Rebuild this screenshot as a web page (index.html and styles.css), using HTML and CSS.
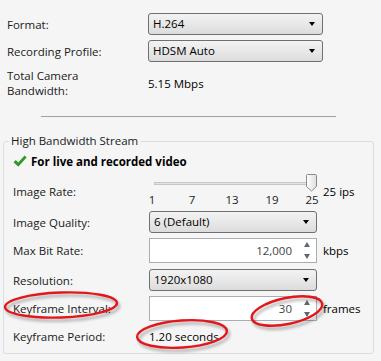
FILE: index.html
```html
<!DOCTYPE html>
<html lang="en">
<head>
    <meta charset="UTF-8">
    <title>Stream Settings</title>
    <link rel="stylesheet" href="styles.css">
</head>
<body>

<div class="page">
    <div class="row">
        <span class="label">Format:</span>
        <div class="select wide">H.264<i class="caret"></i></div>
    </div>
    <div class="row">
        <span class="label">Recording Profile:</span>
        <div class="select wide">HDSM Auto<i class="caret"></i></div>
    </div>
    <div class="row row-total">
        <span class="label">Total Camera<br>Bandwidth:</span>
        <span class="value">5.15 Mbps</span>
    </div>

    <div class="sep"></div>

    <fieldset class="group">
        <legend>High Bandwidth Stream</legend>

        <div class="note">
            <svg class="check" width="14" height="13" viewBox="0 0 14 13">
                <path d="M0.5 7.2 L2.8 5 L5.3 7.6 L11.6 0.6 L13.6 2.6 L5.3 11.8 Z" fill="#2f9a2c"/>
            </svg>
            For live and recorded video
        </div>

        <div class="row row-slider">
            <span class="label">Image Rate:</span>
            <div class="slider">
                <div class="track">
                    <svg class="thumb" width="11" height="18" viewBox="0 0 11 18">
                        <defs>
                            <linearGradient id="tg" x1="0" y1="0" x2="1" y2="0">
                                <stop offset="0" stop-color="#ffffff"/>
                                <stop offset="1" stop-color="#dedede"/>
                            </linearGradient>
                        </defs>
                        <path d="M1.5 0.5 H9.5 Q10.5 0.5 10.5 1.5 V12.5 L5.5 17 L0.5 12.5 V1.5 Q0.5 0.5 1.5 0.5 Z" fill="url(#tg)" stroke="#8a8a8a"/>
                    </svg>
                </div>
                <div class="ticks">
                    <span>1</span><span>7</span><span>13</span><span>19</span><span>25</span>
                </div>
            </div>
            <span class="unit">25 ips</span>
        </div>

        <div class="row row-select">
            <span class="label">Image Quality:</span>
            <div class="select">6 (Default)<i class="caret"></i></div>
        </div>

        <div class="row row-spin">
            <span class="label">Max Bit Rate:</span>
            <div class="spin">
                <span class="spin-value">12,000</span>
                <span class="spin-arrows"><i class="up"></i><i class="down"></i></span>
            </div>
            <span class="unit">kbps</span>
        </div>

        <div class="row row-select">
            <span class="label">Resolution:</span>
            <div class="select">1920x1080<i class="caret"></i></div>
        </div>

        <div class="row row-spin">
            <span class="label">Keyframe Interval:</span>
            <div class="spin">
                <span class="spin-value">30</span>
                <span class="spin-arrows"><i class="up"></i><i class="down"></i></span>
            </div>
            <span class="unit">frames</span>
        </div>

        <div class="row row-period">
            <span class="label">Keyframe Period:</span>
            <span class="value">1.20 seconds</span>
        </div>
    </fieldset>

    <!-- hand drawn annotation marks -->
    <svg class="marks" width="381" height="361" viewBox="0 0 381 361">
        <g fill="none" stroke="#e3171b" stroke-width="2.4">
            <ellipse cx="61" cy="305" rx="56" ry="12.5" transform="rotate(-2 61 305)"/>
            <ellipse cx="287" cy="311" rx="36" ry="13" transform="rotate(-12 287 311)"/>
            <ellipse cx="182" cy="334" rx="45" ry="13.5" transform="rotate(-4 182 334)"/>
        </g>
    </svg>
</div>

</body>
</html>
```

FILE: styles.css
```css
body {
    margin: 0;
    padding: 0;
    background-color: #f5f5f5;
    font-family: 'Open Sans', 'Noto Sans', sans-serif;
    font-size: 11.5px;
    color: #1a1a1a;
}

.page {
    position: relative;
    width: 381px;
    height: 361px;
    box-sizing: border-box;
    padding: 13px 0 0 7px;
}

.row {
    display: flex;
    align-items: center;
    height: 22px;
    margin-bottom: 5px;
}

.label {
    width: 141px;
    flex-shrink: 0;
    line-height: 15px;
}

.select {
    position: relative;
    width: 168px;
    height: 22px;
    box-sizing: border-box;
    padding-left: 4px;
    line-height: 20px;
    border: 1px solid #707070;
    border-radius: 3px;
    background: linear-gradient(#f3f3f3, #e8e8e8 50%, #dcdcdc);
    color: #000;
}

.select.wide {
    width: 175px;
}

.caret {
    position: absolute;
    right: 7px;
    top: 8px;
    width: 0;
    height: 0;
    border-left: 3.5px solid transparent;
    border-right: 3.5px solid transparent;
    border-top: 4px solid #000;
}

.row-total {
    height: 30px;
    margin-top: 6px;
    margin-bottom: 0;
}

.value {
    color: #000;
}

.sep {
    margin: 18px 0 0 34px;
    width: 295px;
    height: 1px;
    background-color: #a0a0a0;
}

.group {
    margin: 16px 0 0 -4px;
    width: 371px;
    box-sizing: border-box;
    padding: 4px 0 0 9px;
    border: 1px solid #d5dfe5;
    border-radius: 3px;
}

.group legend {
    margin-left: -4px;
    padding: 0 2px;
    line-height: 16px;
}

.group .label {
    width: 136px;
}

.note {
    display: flex;
    align-items: center;
    height: 16px;
    font-weight: bold;
    color: #000;
}

.check {
    margin-right: 4px;
}

.row-slider {
    height: 36px;
    margin: 4px 0 2px 0;
}

.slider {
    width: 168px;
    height: 36px;
}

.track {
    position: relative;
    margin: 9px 0 0 5px;
    width: 162px;
    height: 3px;
    box-sizing: border-box;
    border: 1px solid #c6c6c6;
    background-color: #e3e3e3;
}

.thumb {
    position: absolute;
    right: -2px;
    top: -9px;
}

.ticks {
    display: grid;
    grid-template-columns: repeat(5, 40px);
    margin: 8px 0 0 -17px;
    text-align: center;
    line-height: 14px;
    color: #222;
}

.unit {
    margin-left: 6px;
    color: #000;
}

.row-select {
    height: 22px;
    margin-bottom: 5px;
}

.row-spin {
    height: 25px;
    margin-bottom: 6px;
}

.spin {
    display: flex;
    align-items: center;
    justify-content: flex-end;
    width: 168px;
    height: 25px;
    box-sizing: border-box;
    border: 1px solid #abadb3;
    background-color: #fff;
}

.spin-value {
    color: #444;
    margin-right: 8px;
}

.spin-arrows {
    display: flex;
    flex-direction: column;
    justify-content: space-between;
    align-items: center;
    width: 14px;
    height: 17px;
    margin-right: 2px;
}

.spin-arrows i {
    width: 0;
    height: 0;
    border-left: 3px solid transparent;
    border-right: 3px solid transparent;
}

.spin-arrows .up {
    border-bottom: 5px solid #5e6872;
}

.spin-arrows .down {
    border-top: 5px solid #5e6872;
}

.row-period {
    height: 18px;
    margin-bottom: 8px;
}

.marks {
    position: absolute;
    left: 0;
    top: 0;
    filter: drop-shadow(2px 3px 1.5px rgba(0, 0, 0, 0.3));
}
```
